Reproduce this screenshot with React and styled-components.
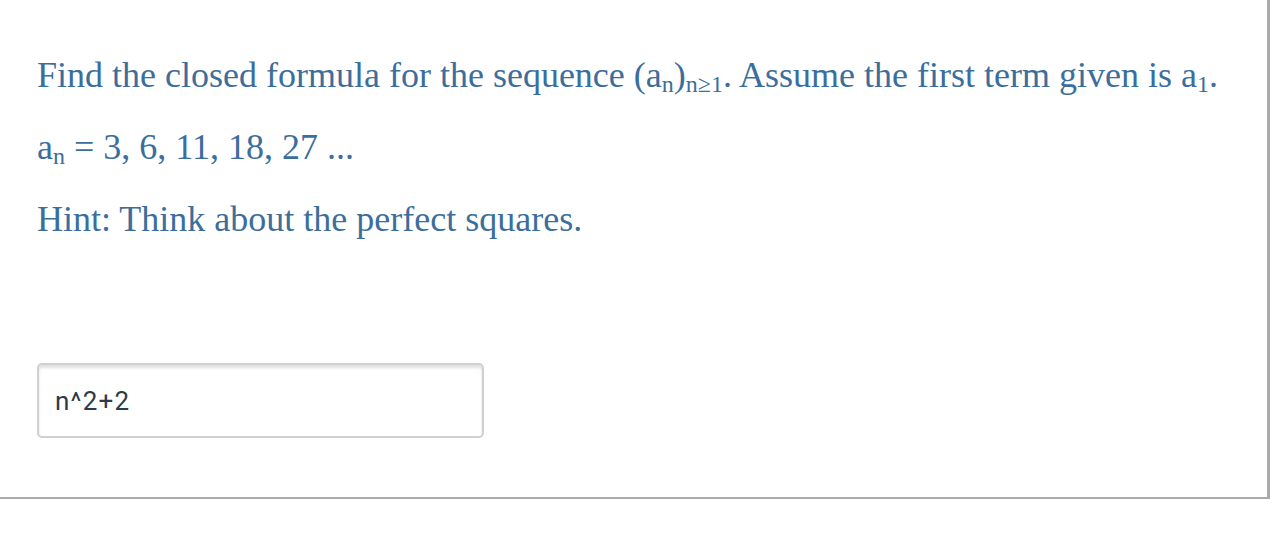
import React from "react";
import styled, { createGlobalStyle } from "styled-components";

const Global = createGlobalStyle`
  html, body { margin: 0; padding: 0; background: #fff; }
  body { width: 1280px; height: 548px; overflow: hidden; }
`;

const Panel = styled.div`
  box-sizing: border-box;
  width: 1270px;
  height: 499px;
  padding: 0 0 0 37px;
  border-right: 3px solid #aaaaaa;
  border-bottom: 2px solid #aaaaaa;
  display: flex;
  flex-direction: column;
`;

const Text = styled.p`
  margin: ${(p) => p.$top}px 0 0;
  font-family: "Liberation Serif", "Times New Roman", serif;
  font-size: 36px;
  line-height: 40px;
  height: 40px;
  color: #3b6e9c;
  white-space: nowrap;
`;

const Sub = styled.sub`
  font-size: 24px;
  vertical-align: -5px;
  line-height: 0;
`;

const Input = styled.div`
  margin-top: 124px;
  width: 447px;
  height: 75px;
  box-sizing: border-box;
  border: 2px solid #d0d0d0;
  border-radius: 5px;
  box-shadow: inset 0 3px 3px rgba(0, 0, 0, 0.12);
  display: flex;
  align-items: center;
  padding-left: 16px;
  font-family: Roboto, "Liberation Sans", sans-serif;
  font-size: 26px;
  letter-spacing: 1.2px;
  color: #2e3a46;
`;

export default function App() {
  return (
    <>
      <Global />
      <Panel>
        <Text $top={55}>
          Find the closed formula for the sequence (a<Sub>n</Sub>)<Sub>n≥1</Sub>. Assume the first term given is a<Sub>1</Sub>.
        </Text>
        <Text $top={32}>
          a<Sub>n</Sub> = 3, 6, 11, 18, 27 ...
        </Text>
        <Text $top={32}>Hint: Think about the perfect squares.</Text>
        <Input>n^2+2</Input>
      </Panel>
    </>
  );
}
